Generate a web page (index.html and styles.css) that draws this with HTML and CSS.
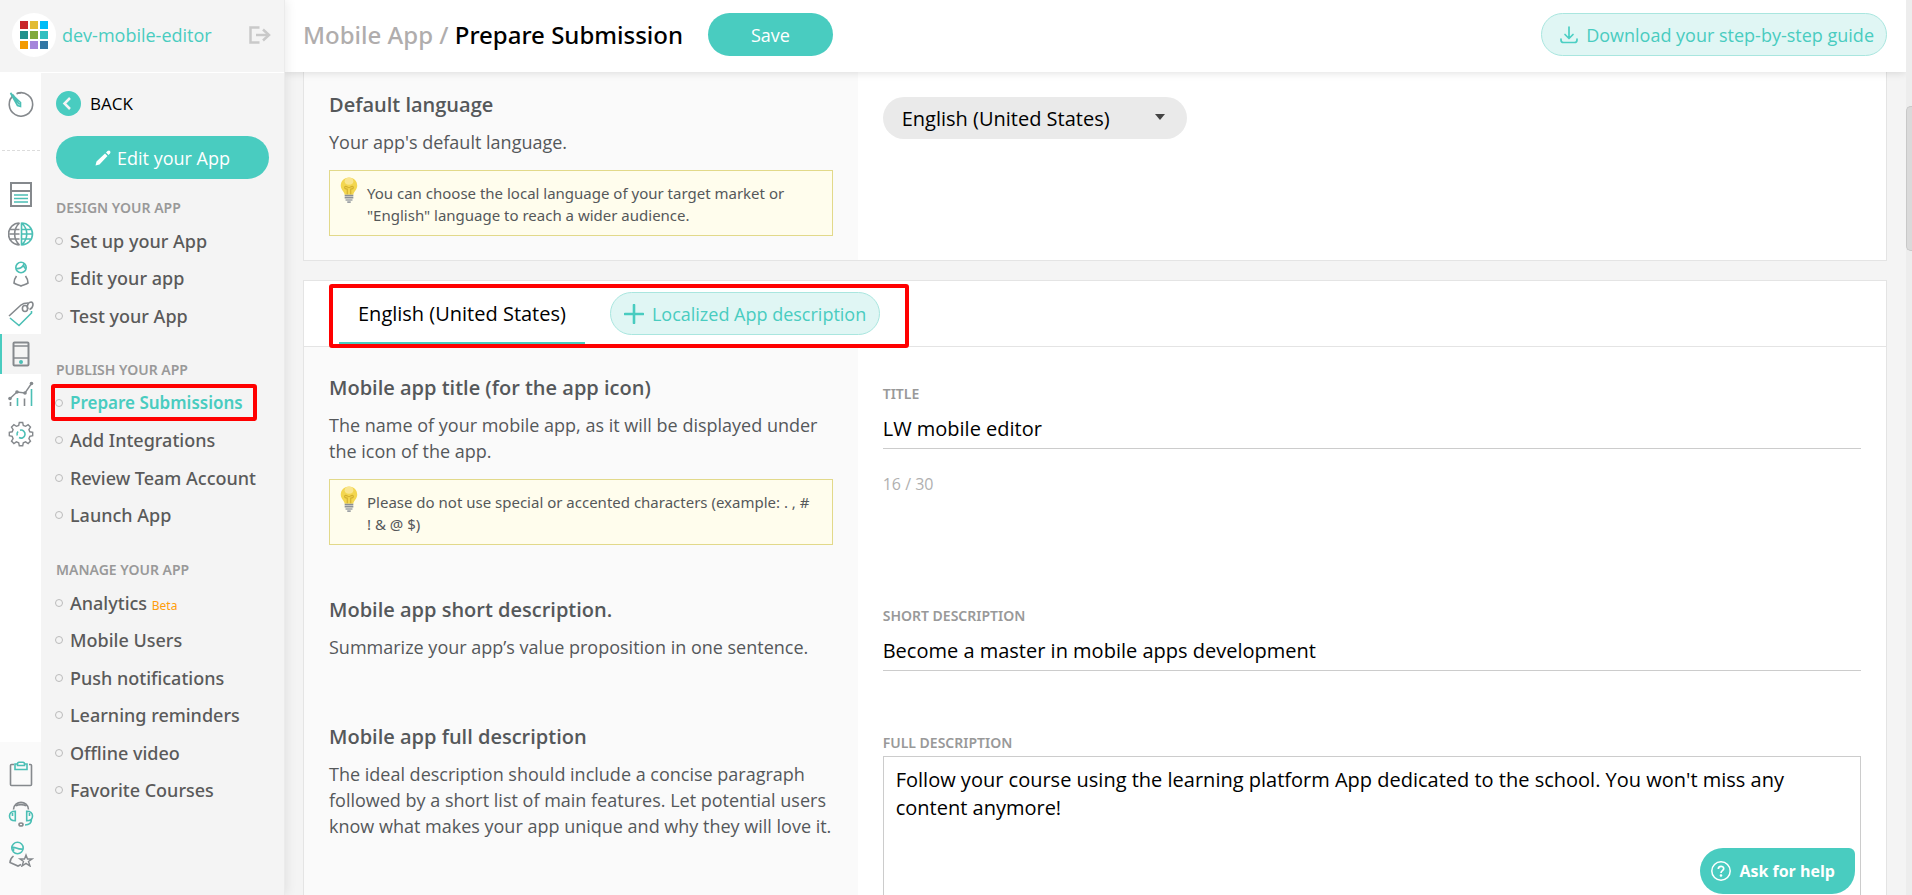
FILE: index.html
```html
<!DOCTYPE html>
<html lang="en">
<head>
<meta charset="utf-8">
<meta name="viewport" content="width=device-width, initial-scale=1">
<title>Prepare Submission</title>
<link rel="stylesheet" href="styles.css">
</head>
<body>
<div class="app">
  <aside class="side">
    <div class="brand">
      <span class="logo"><i class="red"></i><i class="gold"></i><i class="sky"></i><i class="pine"></i><i class="leaf"></i><i class="aqua"></i><i class="amber"></i><i class="lilac"></i><i class="steel"></i></span>
      <a class="brand-name" href="#">dev-mobile-editor</a>
      <a class="logout" href="#" aria-label="Log out">
        <svg width="22" height="18" viewBox="0 0 22 18" fill="none" stroke="#c9c9c9" stroke-width="2.500"><path d="M10.500 1.500H1.500V16.500H10.500M7 9H20" /><path d="M14 3.500L20 9L14 14.500"/></svg>
      </a>
    </div>
    <div class="side-body">
      <nav class="rail" aria-label="Sections">
        <a class="rail-item" href="#" aria-label="Dashboard">
          <svg class="ico" viewBox="0 0 26 26"><path class="g" d="M6 4A11.700 11.700 0 1 0 9 2.400"/><path class="g" d="M8.500 2.700A11.700 11.700 0 0 1 13 1.800"/><path class="t" d="M2.500 2L12.500 11.500V15.500L9.500 14.500ZM4 4L11.500 13.500"/></svg>
        </a>
        <div class="dash"></div>
        <a class="rail-item" href="#" aria-label="Pages">
          <svg class="ico" viewBox="0 0 26 26"><path class="g wide-line" d="M3 2H23V25H3ZM3 10H23"/><path class="t" d="M6 14H20M6 17.500H20M6 21H20"/></svg>
        </a>
        <a class="rail-item" href="#" aria-label="Website">
          <svg class="ico" viewBox="0 0 26 26"><path class="g" d="M11.500 2A11 11 0 0 0 11.500 24M11.500 2C5 8 5 18 11.500 24M2 8.500H11.500M1.500 13H11.500M2 18H11.500"/><path class="t" d="M13.500 1.500V24.500M13.500 2A11 11 0 0 1 13.500 24M13.500 2C20.500 8 20.500 18 13.500 24M13.500 8.500H23.500M13.500 13H24.500M13.500 18H23.500"/></svg>
        </a>
        <a class="rail-item" href="#" aria-label="Users">
          <svg class="ico" viewBox="0 0 26 26"><circle class="t" cx="13" cy="6.500" r="5.200"/><path class="t" d="M8 7.500C11.500 8 14 6.500 15.500 4C16 6 17 7.500 18 7.500"/><path class="g" d="M8.500 15C7 17 6 20 6 22C8 23.500 11 24 13 25C15 24 18 23.500 20 22C20 20 19 17 17.500 15"/></svg>
        </a>
        <a class="rail-item" href="#" aria-label="Marketing">
          <svg class="ico" viewBox="0 0 26 26"><path class="g" d="M1 15L13 4C15 2.300 17 2 20 2"/><ellipse class="g" cx="17" cy="7.500" rx="2.600" ry="3"/><path class="g" d="M20 8C18.500 5 20 1 23 1C26 1.500 25.500 7 21.500 8.500"/><path class="t" d="M2 17L11 24.500L23.500 12V10"/></svg>
        </a>
        <a class="rail-item active" href="#" aria-label="Mobile app">
          <svg class="ico" viewBox="0 0 26 26"><rect class="g wide-line" x="5.500" y="1.500" width="15" height="23" rx="1"/><path class="g" d="M5.500 5H20.500M5.500 17H20.500"/><circle cx="13" cy="21" r="2" fill="#4bbfb5"/></svg>
        </a>
        <a class="rail-item" href="#" aria-label="Reports">
          <svg class="ico" viewBox="0 0 26 26"><path class="g thin" d="M2 17.500L9 11L17 12L23.500 2.500"/><g fill="#85898d"><circle cx="2" cy="17.500" r="1.800"/><circle cx="9" cy="11" r="1.800"/><circle cx="17" cy="12" r="1.800"/><circle cx="23.500" cy="2.500" r="1.800"/></g><path class="g" d="M2.500 21V25M16.500 17.500V25"/><path class="t" d="M9.500 17V25M23.500 8V25"/></svg>
        </a>
        <a class="rail-item" href="#" aria-label="Settings">
          <svg class="ico" viewBox="0 0 26 26"><path class="g thin" d="M11.300 1.500H14.700L15.300 4.400L17.600 5.300L20.100 3.700L22.500 6.100L20.900 8.500L21.800 10.800L24.700 11.400V14.800L21.800 15.400L20.900 17.700L22.500 20.100L20.100 22.500L17.600 20.900L15.300 21.800L14.700 24.700H11.300L10.700 21.800L8.400 20.900L5.900 22.500L3.500 20.100L5.100 17.700L4.200 15.400L1.300 14.800V11.400L4.200 10.800L5.100 8.500L3.500 6.100L5.900 3.700L8.400 5.300L10.700 4.400Z"/><path class="t" d="M12 9.200A4 4 0 1 1 11 16.500M9.200 14.500A4 4 0 0 1 10 10.500"/></svg>
        </a>
        <div class="rail-foot">
          <a class="rail-item" href="#" aria-label="Tasks">
            <svg class="ico" viewBox="0 0 26 26"><path class="g" d="M6 3.500H3.500Q2.500 3.500 2.500 4.500V23.500Q2.500 24.500 3.500 24.500H22.500Q23.500 24.500 23.500 23.500V4.500Q23.500 3.500 22.500 3.500H21"/><path class="t" d="M9.500 3H7V8.500H19V3H16.500Q16.500 1.200 15 1.200H11Q9.500 1.200 9.500 3V4.500H16.500V3"/></svg>
          </a>
          <a class="rail-item" href="#" aria-label="Support">
            <svg class="ico" viewBox="0 0 26 26"><path class="g" d="M5.500 8.500C6 -1 20 -1 20.500 8.500M8 5C10 3.200 16 3.200 18 5"/><path class="t" d="M7.300 10.200V19.800C4 19.800 1.500 18 1.500 15C1.500 12 4 10.200 7.300 10.200ZM4.500 12V15M18.700 10.200V19.800C22 19.800 24.500 18 24.500 15C24.500 12 22 10.200 18.700 10.200ZM21.500 12V15M23.500 18C23.500 22.500 21 24 17 24"/><ellipse class="g" cx="13" cy="23.500" rx="2" ry="1.500"/></svg>
          </a>
          <a class="rail-item" href="#" aria-label="Community">
            <svg class="ico" viewBox="0 0 26 26"><circle class="t" cx="9.500" cy="7" r="5.700"/><path class="t" d="M3.800 7C6.500 4.500 9 9 15 8M5.500 7.500V10"/><path class="g" d="M5.500 15C3 17 2 19.500 2 21.500L10 25L13 23.500"/><path class="g thin" d="M18 14L19.500 18H24L20.500 20.500L22 25L18 22.300L14 25L15.500 20.500L12 18H16.500Z"/></svg>
          </a>
        </div>
      </nav>

      <nav class="menu" aria-label="Mobile app">
        <a class="back" href="#">
          <svg width="25" height="25" viewBox="0 0 25 25"><circle cx="12.500" cy="12.500" r="12.500" fill="#49ccc0"/><path d="M14 7L8.500 12.500L14 18" fill="none" stroke="#f4f4f4" stroke-width="2.500"/></svg>
          BACK
        </a>
        <button class="btn wide" type="button">
          <svg width="16" height="16" viewBox="0 0 16 16" fill="#fff"><path d="M0.500 15.500L1.500 11.500L10 3.500L12.500 6L4.500 14.500ZM11 2.500L12.500 1Q14 0 15 1Q16 2 15 3.500L13.500 5Z"/></svg>
          Edit your App
        </button>

        <h2 class="menu-head">DESIGN YOUR APP</h2>
        <ul class="menu-list">
          <li><a href="#">Set up your App</a></li>
          <li><a href="#">Edit your app</a></li>
          <li><a href="#">Test your App</a></li>
        </ul>
        <h2 class="menu-head">PUBLISH YOUR APP</h2>
        <ul class="menu-list">
          <li class="marked"><a class="current" href="#">Prepare Submissions</a></li>
          <li><a href="#">Add Integrations</a></li>
          <li><a href="#">Review Team Account</a></li>
          <li><a href="#">Launch App</a></li>
        </ul>
        <h2 class="menu-head">MANAGE YOUR APP</h2>
        <ul class="menu-list">
          <li><a href="#">Analytics <small>Beta</small></a></li>
          <li><a href="#">Mobile Users</a></li>
          <li><a href="#">Push notifications</a></li>
          <li><a href="#">Learning reminders</a></li>
          <li><a href="#">Offline video</a></li>
          <li><a href="#">Favorite Courses</a></li>
        </ul>
      </nav>
    </div>
  </aside>

  <div class="main">
    <header class="topbar">
      <h1 class="title"><span>Mobile App /</span> Prepare Submission</h1>
      <button class="btn save" type="button">Save</button>
      <a class="soft guide" href="#">
        <svg width="18" height="18" viewBox="0 0 18 18" fill="none" stroke="#4bcfc3" stroke-width="1.700" stroke-linecap="round" stroke-linejoin="round"><path d="M9 1V12M5 8.500L9 12.500L13 8.500M1 13V14Q1 16.500 3.500 16.500H14.500Q17 16.500 17 14V13"/></svg>
        Download your step-by-step guide
      </a>
    </header>

    <main class="content">
      <section class="panel cut">
        <div class="row">
          <div class="info">
            <h3>Default language</h3>
            <p>Your app's default language.</p>
            <div class="tip">
              <svg class="bulb" width="20" height="30" viewBox="0 0 20 30"><path d="M10 0.500C4 0.500 0.500 5 0.500 10C0.500 14.500 4.500 16.500 5 20.500H15C15.500 16.500 19.500 14.500 19.500 10C19.500 5 16 0.500 10 0.500Z" fill="#f3d64f"/><ellipse cx="10" cy="5" rx="5" ry="4" fill="#f9e58f"/><path d="M8 20V14C3 14 5 9 8 11.500C9 12.500 11 12.500 12 11.500C15 9 17 14 12 14V20" fill="none" stroke="#d3b02f" stroke-width="1.300"/><path d="M5 21.500H15M5 24H15" stroke="#8b9096" stroke-width="1.800"/><path d="M6 26.500H14M8 29H12" stroke="#9da1a6" stroke-width="1.800"/></svg>
              <span>You can choose the local language of your target market or "English" language to reach a wider audience.</span>
            </div>
          </div>
          <div class="field">
            <span class="pick">
              <select aria-label="Default language"><option>English (United States)</option></select>
            </span>
          </div>
        </div>
      </section>

      <section class="panel">
        <div class="tabs">
          <button class="tab" type="button">English (United States)</button>
          <button class="soft add" type="button">
            <svg width="20" height="20" viewBox="0 0 20 20" stroke="#49ccc0" stroke-width="2.600" stroke-linecap="round"><path d="M10 1V19M1 10H19"/></svg>
            Localized App description
          </button>
          <div class="mark"></div>
        </div>
        <div class="row">
          <div class="info">
            <h3>Mobile app title (for the app icon)</h3>
            <p>The name of your mobile app, as it will be displayed under the icon of the app.</p>
            <div class="tip">
              <svg class="bulb" width="20" height="30" viewBox="0 0 20 30"><path d="M10 0.500C4 0.500 0.500 5 0.500 10C0.500 14.500 4.500 16.500 5 20.500H15C15.500 16.500 19.500 14.500 19.500 10C19.500 5 16 0.500 10 0.500Z" fill="#f3d64f"/><ellipse cx="10" cy="5" rx="5" ry="4" fill="#f9e58f"/><path d="M8 20V14C3 14 5 9 8 11.500C9 12.500 11 12.500 12 11.500C15 9 17 14 12 14V20" fill="none" stroke="#d3b02f" stroke-width="1.300"/><path d="M5 21.500H15M5 24H15" stroke="#8b9096" stroke-width="1.800"/><path d="M6 26.500H14M8 29H12" stroke="#9da1a6" stroke-width="1.800"/></svg>
              <span>Please do not use special or accented characters (example: . , # ! &amp; @ $)</span>
            </div>
          </div>
          <div class="field">
            <label for="title">TITLE</label>
            <input id="title" type="text" value="LW mobile editor">
            <div class="count">16 / 30</div>
          </div>
        </div>
        <div class="row">
          <div class="info">
            <h3>Mobile app short description.</h3>
            <p>Summarize your app’s value proposition in one sentence.</p>
          </div>
          <div class="field">
            <label for="short">SHORT DESCRIPTION</label>
            <input id="short" type="text" value="Become a master in mobile apps development">
          </div>
        </div>
        <div class="row">
          <div class="info">
            <h3>Mobile app full description</h3>
            <p>The ideal description should include a concise paragraph followed by a short list of main features. Let potential users know what makes your app unique and why they will love it.</p>
          </div>
          <div class="field">
            <label for="full">FULL DESCRIPTION</label>
            <textarea id="full" rows="8">Follow your course using the learning platform App dedicated to the school. You won't miss any content anymore!</textarea>
          </div>
        </div>
      </section>
    </main>
  </div>
  <div class="scroll"><div class="thumb"></div></div>

  <button class="help" type="button">
    <svg width="20" height="20" viewBox="0 0 20 20" fill="none" stroke="#fff" stroke-width="1.500"><circle cx="10" cy="10" r="9.200"/><path d="M7.300 8C7.300 4.500 12.700 4.500 12.700 7.700C12.700 9.700 10 9.700 10 12" stroke-width="1.700"/><circle cx="10" cy="14.500" r="0.600" fill="#fff"/></svg>
    Ask for help
  </button>
</div>
</body>
</html>
```
FILE: styles.css
```css
* { box-sizing: border-box; }

body {
  margin: 0;
  height: 100vh;
  overflow: hidden;
  background: #f4f4f4;
  color: #000;
  font-family: "Open Sans", "Noto Sans", sans-serif;
  font-size: 18px;
}

a { color: inherit; text-decoration: none; }
button, input, textarea, select { font: inherit; }
button { cursor: pointer; }
svg { flex: none; display: block; }
h1, h2, h3, p, ul { margin: 0; padding: 0; font-weight: 400; }

.app { display: flex; height: 100vh; position: relative; }

/* Left side */
.side {
  flex: none;
  width: 285px;
  display: flex;
  flex-direction: column;
  background: #f4f4f4;
  border-right: 1px solid #ebebeb;
  box-shadow: 2px 0 10px rgba(0, 0, 0, 0.08);
  z-index: 1;
}
.brand {
  display: flex;
  align-items: center;
  height: 73px;
  padding: 0 13px 3px 12px;
  border-bottom: 1px solid #fff;
}
.logo {
  width: 44px;
  height: 44px;
  padding: 8px;
  border-radius: 50%;
  background: #fff;
  display: grid;
  grid-template-columns: repeat(3, 8px);
  grid-auto-rows: 8px;
  gap: 2px;
}
.red { background: #c9282d; }
.gold { background: #e2bb34; }
.sky { background: #00bdf7; }
.pine { background: #22918c; }
.leaf { background: #82a93d; }
.aqua { background: #30bfc0; }
.amber { background: #f39b00; }
.lilac { background: #a585db; }
.steel { background: #3277a5; }
.brand-name { margin-left: 6px; color: #49ccc0; }
.logout { margin-left: auto; }

.side-body { flex: 1; display: flex; min-height: 0; }
.rail {
  flex: none;
  width: 41px;
  padding-top: 11px;
  background: #fff;
  display: flex;
  flex-direction: column;
}
.rail-item {
  flex: none;
  height: 40px;
  display: flex;
  align-items: center;
  padding-left: 8px;
}
.rail-item.active {
  background: #f4f4f4;
  border-left: 2px solid #49ccc0;
  padding-left: 6px;
}
.ico { width: 26px; height: 26px; fill: none; }
.g { stroke: #85898d; stroke-width: 1.6; }
.t { stroke: #4bbfb5; stroke-width: 1.6; }
.thin { stroke-width: 1.4; }
.wide-line { stroke-width: 2; }
.dash {
  margin: 26px 1px 23px 2px;
  border-top: 1px dashed #dcdcdc;
}
.rail-foot {
  margin-top: auto;
  padding: 12px 0 21px;
  background: #fafafa;
}

.menu { flex: 1; padding: 18px 15px 0; }
.back { display: flex; align-items: center; gap: 9px; height: 25px; font-size: 17px; }
.btn {
  height: 43px;
  border: 0;
  border-radius: 22px;
  background: #49ccc0;
  color: #fff;
  display: flex;
  align-items: center;
  justify-content: center;
  gap: 6px;
}
.wide { width: 100%; margin: 20px 0 19px; }
.menu-head {
  height: 20px;
  line-height: 20px;
  margin-bottom: 4px;
  color: #999;
  font-family: "Noto Sans", sans-serif;
  font-size: 14px;
  font-weight: 600;
}
.menu-list {
  list-style: none;
  display: grid;
  grid-auto-rows: 37px 38px;
  margin-bottom: 26px;
  font-family: "Noto Sans", sans-serif;
}
.menu-list li {
  position: relative;
  display: flex;
  align-items: center;
  gap: 7px;
  margin-left: -1px;
  color: #5a5a5a;
  font-weight: 500;
  white-space: nowrap;
}
.menu-list li::before {
  content: "";
  width: 6px;
  height: 6px;
  border: 1px solid #bbb;
  border-radius: 50%;
}
.menu-list small { color: #ff9d0a; font-size: 12px; font-weight: 400; }
.menu-list .current { color: #49ccc0; font-size: 17px; font-weight: 600; }
.marked::after {
  content: "";
  position: absolute;
  inset: 0 12px 0 -4px;
  border: 4px solid #f00;
  border-radius: 3px;
}

/* Main area */
.main { flex: 1; min-width: 0; display: flex; flex-direction: column; }
.topbar {
  flex: none;
  height: 72px;
  padding: 0 19px 3px 18px;
  display: flex;
  align-items: center;
  background: #fff;
  box-shadow: 0 1px 8px rgba(0, 0, 0, 0.12);
  position: relative;
}
.title { font-family: "Noto Sans", sans-serif; font-size: 24px; font-weight: 500; white-space: nowrap; }
.title span { color: #b0adad; }
.save { width: 125px; margin-left: 25px; }
.soft {
  height: 43px;
  border: 1px solid #a9e6df;
  border-radius: 22px;
  background: #e0f6f4;
  color: #49ccc0;
  display: flex;
  align-items: center;
  gap: 8px;
  white-space: nowrap;
}
.guide { margin-left: auto; padding: 0 12px 0 18px; }

.content { flex: 1; min-height: 0; overflow: hidden; padding: 0 19px 0 18px; }
.panel { margin-bottom: 19px; border: 1px solid #e4e4e4; background: #fff; }
.cut { border-top: 0; }
.row { display: grid; grid-template-columns: 35% 1fr; }
.info { padding: 27px 25px 24px; background: #fafafa; color: #55585a; }
.cut .info { padding-top: 19px; }
.info h3 { line-height: 28px; font-size: 20px; font-weight: 600; }
.info p { margin-top: 10px; line-height: 26px; }
.tip {
  display: flex;
  gap: 8px;
  margin-top: 15px;
  padding: 6px 20px 9px 9px;
  border: 1px solid #e2d98a;
  background: #fffded;
  font-family: "Noto Sans", sans-serif;
  font-size: 15px;
  line-height: 22px;
}
.tip span { padding-top: 5px; }
.bulb { height: 26px; }

.field { padding: 37px 25px 25px; }
.cut .field { padding-top: 25px; }
.field label {
  display: block;
  height: 20px;
  line-height: 20px;
  color: #999;
  font-family: "Noto Sans", sans-serif;
  font-size: 14px;
  font-weight: 600;
}
.field input {
  display: block;
  width: 100%;
  height: 45px;
  padding: 4px 0 0;
  border: 0;
  border-bottom: 1px solid #ccc;
  background: none;
  font-size: 20px;
}
.count { margin-top: 25px; line-height: 20px; color: #b0b0b0; font-size: 16px; }
.field textarea {
  display: block;
  width: 100%;
  margin-top: 3px;
  padding: 9px 12px;
  border: 1px solid #ccc;
  resize: none;
  font-size: 20px;
  line-height: 28px;
}
.pick { position: relative; display: block; width: 304px; }
.pick select {
  appearance: none;
  width: 100%;
  height: 42px;
  padding: 0 19px;
  border: 0;
  border-radius: 21px;
  background: #eaeaea;
  font-size: 20px;
}
.pick::after {
  content: "";
  position: absolute;
  right: 22px;
  top: 17px;
  border: 5px solid transparent;
  border-top: 6px solid #444;
  border-bottom: 0;
}

.tabs {
  position: relative;
  display: flex;
  align-items: center;
  height: 66px;
  padding-left: 35px;
  border-bottom: 1px solid #e4e4e4;
}
.tab {
  align-self: stretch;
  margin-bottom: 1px;
  padding: 4px 19px 0;
  border: 0;
  border-bottom: 3px solid #49ccc0;
  background: none;
  font-size: 20px;
  white-space: nowrap;
}
.add { margin-left: 25px; padding: 0 13px; }
.mark {
  position: absolute;
  left: 25px;
  top: 3px;
  width: 580px;
  height: 64px;
  border: 4px solid #f00;
  border-radius: 3px;
}

.scroll { flex: none; width: 6px; padding-top: 106px; background: #ededed; z-index: 1; }
.thumb { height: 145px; border: 1px solid #c8c8c8; border-right: 0; border-radius: 5px 0 0 5px; background: #dadada; }

.help {
  position: absolute;
  right: 57px;
  bottom: 1px;
  height: 46px;
  padding: 0 20px 0 11px;
  border: 0;
  border-radius: 23px 6px 23px 23px;
  background: #49ccc0;
  color: #fff;
  font-size: 16px;
  font-weight: 700;
  display: flex;
  align-items: center;
  gap: 8px;
}
```
